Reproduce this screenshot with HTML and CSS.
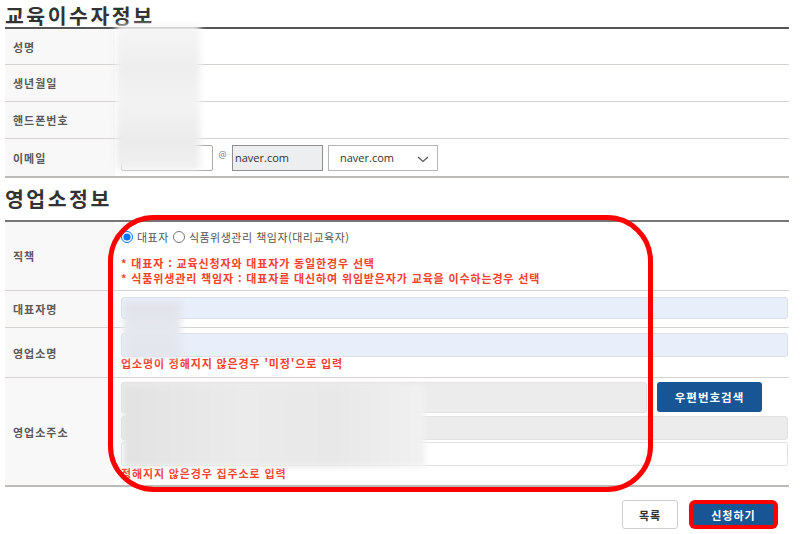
FILE: index.html
```html
<!DOCTYPE html>
<html lang="ko">
<head>
<meta charset="utf-8">
<title>교육이수자정보</title>
<link rel="stylesheet" href="styles.css">
</head>
<body>
<div class="page">
  <h2 class="title t1">교육이수자정보</h2>
  <div class="tbl tbl1">
    <div class="row r1"><div class="lbl">성명</div><div class="val"></div></div>
    <div class="row r2"><div class="lbl">생년월일</div><div class="val"></div></div>
    <div class="row r3"><div class="lbl">핸드폰번호</div><div class="val"></div></div>
    <div class="row r4 last">
      <div class="lbl">이메일</div>
      <div class="val email">
        <span class="box e1"></span>
        <span class="at">@</span>
        <span class="box e2">naver.com</span>
        <span class="box sel">naver.com
          <svg class="chev" width="12" height="7" viewBox="0 0 12 7"><path d="M1 1 L6 5.5 L11 1" fill="none" stroke="#555" stroke-width="1.2"/></svg>
        </span>
      </div>
    </div>
    <div class="blur b1"></div>
  </div>

  <h2 class="title t2">영업소정보</h2>
  <div class="tbl tbl2">
    <div class="row s1">
      <div class="lbl">직책</div>
      <div class="val pos">
        <div class="radios">
          <label class="rad"><input type="radio" name="pos" checked> 대표자</label>
          <label class="rad"><input type="radio" name="pos"> 식품위생관리 책임자(대리교육자)</label>
        </div>
        <p class="warn w1">* 대표자 : 교육신청자와 대표자가 동일한경우 선택</p>
        <p class="warn">* 식품위생관리 책임자 : 대표자를 대신하여 위임받은자가 교육을 이수하는경우 선택</p>
      </div>
    </div>
    <div class="row s2">
      <div class="lbl">대표자명</div>
      <div class="val"><span class="field blue f1"></span></div>
    </div>
    <div class="row s3">
      <div class="lbl">영업소명</div>
      <div class="val col">
        <span class="field blue f2"></span>
        <p class="warn">업소명이 정해지지 않은경우 '미정'으로 입력</p>
      </div>
    </div>
    <div class="row s4 last">
      <div class="lbl">영업소주소</div>
      <div class="val col">
        <div class="addr1">
          <span class="field gray a1"></span>
          <button class="btn blue-btn zip">우편번호검색</button>
        </div>
        <span class="field gray a2"></span>
        <span class="field white a3"></span>
        <p class="warn">정해지지 않은경우 집주소로 입력</p>
      </div>
    </div>
    <div class="blur b2"></div>
    <div class="blur b3"></div>
  </div>

  <div class="actions">
    <button class="btn list">목록</button>
    <span class="hl"><button class="btn blue-btn apply">신청하기</button></span>
  </div>

  <div class="mark"></div>
</div>
</body>
</html>
```

FILE: styles.css
```css
* { box-sizing: border-box; }
html, body { margin: 0; padding: 0; background: #fff; }
body {
  font-family: "Noto Sans CJK KR", "Noto Sans", sans-serif;
  color: #444;
  width: 800px;
  height: 534px;
  overflow: hidden;
}
.page {
  position: relative;
  padding: 0 11px 0 5px;
}
.title {
  margin: 0;
  font-size: 20.5px;
  line-height: 30px;
  font-weight: 700;
  color: #333;
  letter-spacing: 2.5px;
}
.t1 { margin-bottom: -3px; }
.t2 { margin-top: 5px; margin-bottom: 7px; }

.tbl { position: relative; }
.tbl1 { border-top: 2px solid #555; }
.tbl2 { border-top: 2px solid #777; }

.row {
  display: flex;
  border-bottom: 1px solid #d6d3d0;
}
.row.last { border-bottom: 2px solid #bdbab8; }
.lbl {
  width: 110px;
  flex: none;
  background: #f8f8f8;
  display: flex;
  align-items: center;
  padding-left: 8px;
  font-size: 11px;
  font-weight: 700;
  color: #5a5a5a;
  letter-spacing: 1px;
}
.val {
  flex: 1;
  padding-left: 6px;
  padding-right: 1px;
}
.tbl1 .row { height: 37px; }
.tbl1 .r1 { height: 36px; }
.tbl1 .r4 { height: 39px; }

.email {
  display: flex;
  align-items: center;
  font-family: "Open Sans", sans-serif;
  font-size: 11px;
  color: #333;
}
.box {
  height: 26px;
  border: 1px solid #a9a9a9;
  display: flex;
  align-items: center;
}
.e1 { width: 92px; border-radius: 2px; }
.at { width: 19px; text-align: center; font-size: 9px; color: #777; margin-top: -6px; }
.e2 { width: 91px; background: #eceeef; border-color: #8f8f8f; padding-left: 2px; }
.sel { width: 110px; margin-left: 5px; padding-left: 11px; position: relative; border-color: #b5b5b5; }
.chev { position: absolute; right: 8px; top: 10px; }

.blur {
  position: absolute;
  filter: blur(3px);
  pointer-events: none;
}
.b1 {
  left: 111px;
  top: -4px;
  width: 84px;
  height: 145px;
  background: linear-gradient(180deg, #f6f6f6 0%, #eeeeee 30%, #f3f3f3 55%, #ebebeb 80%, #f1f1f1 100%);
}
.b2 {
  left: 118px;
  top: 80px;
  width: 58px;
  height: 56px;
  background: linear-gradient(180deg, #e2e3ea 0%, #e6e8ef 50%, #e3e5ec 100%);
}
.b3 {
  left: 118px;
  top: 163px;
  width: 302px;
  height: 82px;
  background: linear-gradient(90deg, #e2e2e2 0%, #ebebeb 40%, #e8e8e8 70%, #f1f1f1 100%);
}

/* section 2 */
.s1 { height: 69px; }
.s2 { height: 37px; }
.s3 { height: 50px; }
.s4 { height: 109px; }

.pos { padding-top: 6px; }
.radios {
  display: flex;
  align-items: center;
  gap: 4px;
  font-size: 11px;
  color: #555;
  height: 18px;
  letter-spacing: 0.5px;
}
.rad { display: flex; align-items: center; gap: 4px; }
.rad input {
  margin: 0;
  width: 12px;
  height: 12px;
}
.warn {
  margin: 0;
  font-size: 11px;
  line-height: 15px;
  font-weight: 700;
  color: #f4412e;
  letter-spacing: 0.85px;
}
.w1 { margin-top: 10px; }

.s2 .val { padding-top: 6px; }
.col { display: flex; flex-direction: column; }
.s3 .val { padding-top: 5px; }
.field {
  display: block;
  border: 1px solid #dcdfe6;
  border-radius: 3px;
}
.blue { background: #e8eefa; }
.f1 { height: 22px; }
.f2 { height: 24px; }
.s3 .warn { line-height: 13px; margin-top: 0; }

.s4 .val { padding-top: 4px; }
.addr1 { display: flex; align-items: flex-start; gap: 10px; }
.gray { background: #ececec; border-color: #e2e2e2; }
.white { background: #fff; border-color: #e2e2e2; }
.a1 { width: 526px; height: 31px; }
.a2 { height: 24px; margin-top: 3px; }
.a3 { height: 24px; margin-top: 2px; }
.s4 .warn { margin-top: 0px; line-height: 14px; }

.btn {
  font-family: "Noto Sans CJK KR", sans-serif;
  font-weight: 700;
  font-size: 11px;
  cursor: pointer;
  padding: 0;
}
.blue-btn {
  background: #185595;
  color: #fff;
  border: none;
  border-radius: 3px;
}
.zip { width: 105px; height: 30px; font-size: 11.5px; letter-spacing: 1px; }

.actions {
  display: flex;
  justify-content: flex-end;
  align-items: center;
  gap: 11px;
  margin-top: 13px;
  padding-right: 11px;
}
.list {
  width: 56px;
  height: 29px;
  background: #fff;
  border: 1px solid #cfcfcf;
  border-radius: 3px;
  color: #333;
  letter-spacing: 1px;
}
.hl {
  display: inline-flex;
  padding: 4px;
  border-radius: 6px;
  background: #ff0000;
}
.apply { width: 81px; height: 21px; letter-spacing: 1px; }

.mark {
  position: absolute;
  left: 108px;
  top: 215px;
  width: 545px;
  height: 277px;
  border: 5px solid #ff0000;
  border-radius: 46px;
  pointer-events: none;
}
```
